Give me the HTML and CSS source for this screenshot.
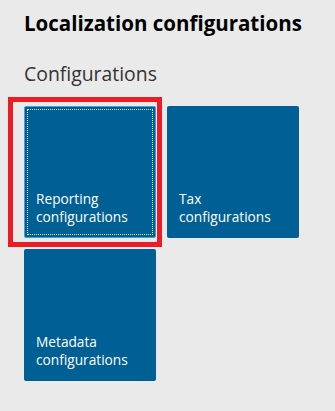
FILE: index.html
```html
<!DOCTYPE html>
<html lang="en">
<head>
	<meta charset="UTF-8">
	<title>Localization configurations</title>
	<link rel="stylesheet" href="styles.css">
</head>
<body>
	<div class="workspace">
		<h1 class="pageTitle">Localization configurations</h1>
		<h2 class="groupTitle">Configurations</h2>
		<div class="tileGrid">
			<a class="tile focused" href="#">
				<span class="tileLabel">Reporting configurations</span>
				<span class="highlight"></span>
			</a>
			<a class="tile" href="#">
				<span class="tileLabel">Tax configurations</span>
			</a>
			<a class="tile" href="#">
				<span class="tileLabel">Metadata configurations</span>
			</a>
		</div>
	</div>
</body>
</html>
```

FILE: styles.css
```css
html,
body {
  margin: 0;
  padding: 0;
  background: #eaeaea;
}
body {
  font-family: "Open Sans", "Noto Sans", sans-serif;
  width: 335px;
  height: 411px;
  overflow: hidden;
}
.workspace {
  padding: 9px 0 0 24px;
}
.pageTitle {
  margin: 0;
  font-size: 20.5px;
  line-height: 28px;
  font-weight: bold;
  color: #000;
}
.groupTitle {
  margin: 25px 0 0 0;
  font-size: 19.4px;
  line-height: 24px;
  font-weight: normal;
  color: #333;
}
.tileGrid {
  display: grid;
  grid-template-columns: 132px 132px;
  gap: 11px;
  margin-top: 20px;
}
.tile {
  position: relative;
  box-sizing: border-box;
  display: flex;
  align-items: flex-end;
  width: 132px;
  height: 132px;
  padding: 0 10px 12px 12px;
  background: #005f94;
  border-radius: 2px;
  color: #fff;
  text-decoration: none;
}
.tileLabel {
  font-size: 13.7px;
  line-height: 18px;
}
.tile.focused {
  border: 1px solid #3aa0e0;
  padding: 0 9px 11px 11px;
}
.tile.focused:before {
  position: absolute;
  content: " ";
  top: 2px;
  left: 2px;
  right: 2px;
  bottom: 2px;
  border: 1px dotted #e8eef4;
}
.highlight {
  position: absolute;
  top: -10px;
  left: -17px;
  width: 144px;
  height: 140px;
  border: 5px solid #ed1c24;
}
```
